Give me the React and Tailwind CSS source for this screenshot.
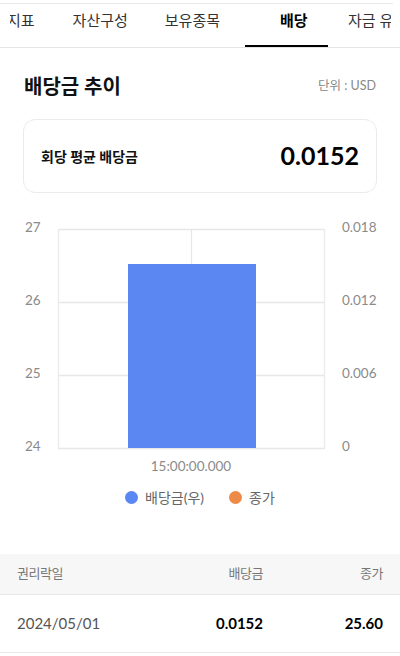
const Tabs = () => {
	return (
		<div className="pt-[3px]">
			<div className="h-px w-[393px] bg-[#e9e9e9]" />
			<div className="flex h-[44px] border-b border-[#e4e4e4]">
				<div className="ml-[10px] flex w-[381px] overflow-hidden text-[15px] leading-[24px] text-[#333]">
					<div className="-ml-[3px] shrink-0 pt-[4px] whitespace-nowrap">지표</div>
					<div className="ml-[38px] shrink-0 pt-[4px] whitespace-nowrap">자산구성</div>
					<div className="ml-[37px] shrink-0 pt-[4px] whitespace-nowrap">보유종목</div>
					<div className="-mb-px ml-[25px] h-[44px] w-[83px] shrink-0 border-b-[3px] border-black pl-[35px] pt-[4px] font-bold text-black whitespace-nowrap">
						배당
					</div>
					<div className="ml-[20px] shrink-0 pt-[4px] whitespace-nowrap">자금 유입</div>
				</div>
			</div>
		</div>
	);
};

const Chart = () => {
	const grid = [229, 302, 375, 448];
	const left = ["27", "26", "25", "24"];
	const right = ["0.018", "0.012", "0.006", "0"];
	const top = 215;
	return (
		<svg width="400" height="262" className="mt-[22px] block">
			{grid.map((y) => (
				<line key={y} x1="58" x2="325" y1={y - top + 0.5} y2={y - top + 0.5} stroke="#e7e7e7" strokeWidth="1.5" />
			))}
			<line x1="58.5" x2="58.5" y1={14} y2={233} stroke="#ececec" strokeWidth="1.5" />
			<line x1="191.5" x2="191.5" y1={14} y2={233} stroke="#e7e7e7" strokeWidth="1.2" />
			<line x1="324.5" x2="324.5" y1={14} y2={233} stroke="#ececec" strokeWidth="1.5" />
			<rect x="128" y={264 - top} width="128" height={448 - 264} fill="#5a87f1" />
			{left.map((l, i) => (
				<text key={l} x="25" y={grid[i] - top + 3} fontSize="13.5" fill="#8a8a8a">{l}</text>
			))}
			{right.map((l, i) => (
				<text key={l} x="342" y={grid[i] - top + 3} fontSize="13.5" fill="#8a8a8a">{l}</text>
			))}
			<text x="191" y={471 - top} fontSize="13.5" fill="#8a8a8a" textAnchor="middle">15:00:00.000</text>
		</svg>
	);
};

const Legend = () => {
	return (
		<div className="mt-[10px] flex h-[20px] items-center justify-center text-[14px] text-[#666]">
			<span className="h-[13px] w-[13px] rounded-full bg-[#5a87f1]" />
			<span className="ml-[7px]">배당금(우)</span>
			<span className="ml-[25px] h-[13px] w-[13px] rounded-full bg-[#ee8a47]" />
			<span className="ml-[7px]">종가</span>
		</div>
	);
};

const Table = () => {
	return (
		<div className="mt-[47px]">
			<div className="grid h-[41px] grid-cols-[1fr_120px_120px] items-center border-b border-[#e8e8e8] bg-[#f7f7f7] px-[17px] text-[13px] tracking-[-0.5px] text-[#777]">
				<span>권리락일</span>
				<span className="text-right">배당금</span>
				<span className="text-right">종가</span>
			</div>
			<div className="grid h-[58px] grid-cols-[1fr_120px_120px] items-center border-b border-[#e8e8e8] px-[17px] text-[15px]">
				<span className="text-[#555]">2024/05/01</span>
				<span className="text-right font-bold text-black">0.0152</span>
				<span className="text-right font-bold text-black">25.60</span>
			</div>
		</div>
	);
};

export default function App() {
	return (
		<div className="h-[656px] w-[400px] overflow-hidden bg-white font-['Lato','Noto_Sans_CJK_KR',sans-serif]">
			<Tabs />
			<div className="flex items-center justify-between px-[24px] pt-[24px]">
				<h1 className="text-[20px] leading-[28px] font-bold text-[#111]">배당금 추이</h1>
				<span className="text-[12.5px] text-[#888]">단위 : USD</span>
			</div>
			<div className="mx-[23px] mt-[19px] flex h-[74px] items-center justify-between rounded-[12px] border border-[#ebebeb] px-[17px]">
				<span className="text-[14px] font-bold text-[#111]">회당 평균 배당금</span>
				<span className="text-[25px] font-bold text-black">0.0152</span>
			</div>
			<Chart />
			<Legend />
			<Table />
		</div>
	);
}
